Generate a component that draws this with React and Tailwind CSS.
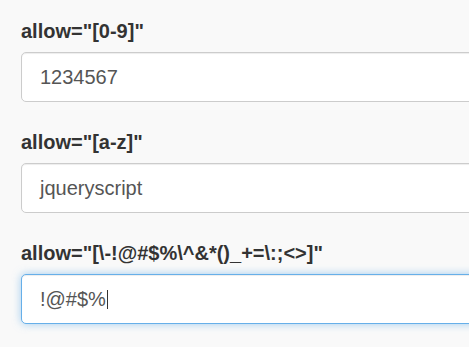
import React from 'react';

const fields = [
  { label: 'allow="[0-9]"', value: '1234567' },
  { label: 'allow="[a-z]"', value: 'jqueryscript' },
  { label: 'allow="[\\-!@#$%\\^&*()_+=\\:;<>]"', value: '!@#$%', focused: true },
];

export default function App() {
  return (
    <div
      className="w-[469px] h-[347px] overflow-hidden bg-[#f9f9f9] pl-[21px] pt-[17px] flex flex-col gap-[26px]"
      style={{ fontFamily: '"Liberation Sans", Arial, sans-serif' }}
    >
      {fields.map((f) => (
        <div key={f.label} className="flex flex-col">
          <label className="text-[20px] leading-[28px] font-bold text-[#333] mb-[7px] whitespace-nowrap">
            {f.label}
          </label>
          <div
            className={`w-[520px] h-[50px] shrink-0 rounded-[5px] bg-white border pl-[18px] flex items-center text-[20px] text-[#555] ${
              f.focused
                ? 'border-[#66afe9] shadow-[inset_0_1px_1px_rgba(0,0,0,0.075),0_0_8px_rgba(102,175,233,0.6)]'
                : 'border-[#ccc] shadow-[inset_0_1px_1px_rgba(0,0,0,0.075)]'
            }`}
          >
            <span className="whitespace-nowrap">{f.value}</span>
            {f.focused && <span className="w-px h-[19px] bg-[#333] ml-px" />}
          </div>
        </div>
      ))}
    </div>
  );
}
